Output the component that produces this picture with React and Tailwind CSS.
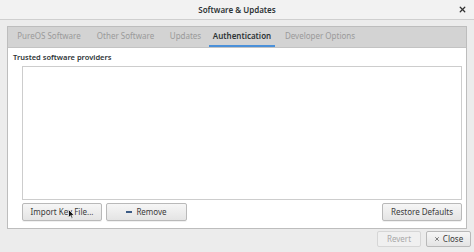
import { X } from 'lucide-react'

const font = { fontFamily: '"Noto Sans", "Open Sans", sans-serif' }
const btn = 'h-[18px] flex items-center justify-center gap-1 rounded-[2px] border border-[#b9b9b9] bg-gradient-to-b from-[#f6f6f6] to-[#e4e4e4] text-[8px] text-[#3a3a3a] shadow-[0_1px_0_rgba(0,0,0,0.06)]'

const TABS = [
  { label: 'PureOS Software', w: 'w-[80px]' },
  { label: 'Other Software', w: 'w-[73px]' },
  { label: 'Updates', w: 'w-[47px]' },
  { label: 'Authentication', w: 'w-[66px]', active: true },
  { label: 'Developer Options', w: 'w-[90px]' },
]

export default function App() {
  return (
    <div className="w-[474px] h-[252px] bg-[#ececec] text-[#2e3436] overflow-hidden" style={font}>

      {/* Title bar */}
      <div className="relative h-[20px] bg-[#f2f2f2] border-b border-[#cfcfcf] flex items-center justify-center">
        <span className="text-[8px] font-semibold text-[#2e3436]">Software &amp; Updates</span>
        <span className="absolute right-[7px] top-[5px] text-[#333]">
          <X size={9} strokeWidth={3.5} />
        </span>
      </div>

      {/* Notebook */}
      <div className="mx-[7px] mt-[6px] h-[203px] border border-[#bdbdbd] flex flex-col">
        <div className="h-[21px] bg-[#d3d3d3] border-b border-[#c3c3c3] flex items-stretch pl-[1px]">
          {TABS.map(t => (
            <div
              key={t.label}
              className={`${t.w} flex items-center justify-center text-[8px] border-b-2 ${t.active ? 'border-[#4a90d9] font-semibold text-[#2e3436]' : 'border-transparent text-[#9a9a9a]'}`}
            >
              {t.label}
            </div>
          ))}
        </div>

        <div className="flex-1 bg-white flex flex-col">
          <p className="pl-[5px] pt-[4px] text-[7.5px] font-semibold leading-[11px] text-[#2e3436]">Trusted software providers</p>
          <div className="flex-1 flex flex-col pl-[14px] pr-[4px] pt-[3px] pb-[7px]">
            <div className="flex-1 border border-[#cdcdcd] bg-white" />
            <div className="mt-[3px] flex items-center">
              <div className="relative">
                <button className={`${btn} w-[80px]`}>Import Key File...</button>
                <svg className="absolute left-[46px] top-[6px]" width="7" height="11" viewBox="0 0 7 11">
                  <path d="M0.5 0.5 L0.5 8.5 L2.5 6.7 L3.8 9.8 L5 9.3 L3.8 6.3 L6.3 6.3 Z" fill="#111" stroke="#fff" strokeWidth="0.7" />
                </svg>
              </div>
              <button className={`${btn} w-[81px] ml-[4px]`}>
                <span className="w-[6px] h-[2px] bg-[#3b5b85]" />
                Remove
              </button>
              <button className={`${btn} w-[80px] ml-auto`}>Restore Defaults</button>
            </div>
          </div>
        </div>
      </div>

      {/* Dialog actions */}
      <div className="mt-[2px] pr-[3px] flex justify-end gap-[5px]">
        <button className="w-[44px] h-[16px] rounded-[2px] border border-[#d6d6d6] bg-[#f0f0f0] text-[8px] text-[#a8a8a8]">Revert</button>
        <button className="w-[45px] h-[16px] flex items-center justify-center gap-[3px] rounded-[2px] border border-[#b9b9b9] bg-gradient-to-b from-[#f6f6f6] to-[#e4e4e4] text-[8px] text-[#3a3a3a]">
          <X size={6} strokeWidth={3} className="text-[#555]" />
          Close
        </button>
      </div>
    </div>
  )
}
